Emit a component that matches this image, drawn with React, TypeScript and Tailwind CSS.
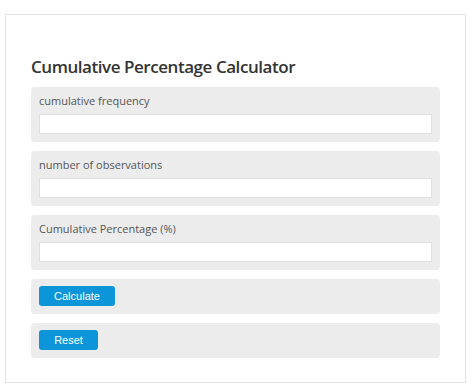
import React from 'react';

const fields = ['cumulative frequency', 'number of observations', 'Cumulative Percentage (%)'];

export default function App() {
  return (
    <div className="w-[474px] h-[389px] bg-white pt-[14px] pl-[5px]" style={{ fontFamily: '"Open Sans", sans-serif' }}>
      <div className="w-[461px] h-[369px] border border-[#e3e3e3] bg-white px-[25px] pt-[40px]">
        <h1 className="text-[17px] leading-[24px] font-semibold text-[#333] tracking-[-0.45px] mb-[8px]">Cumulative Percentage Calculator</h1>
        <div className="flex flex-col gap-[9px]">
          {fields.map((f) => (
            <div key={f} className="bg-[#ececec] rounded-[4px] px-[8px] pt-[6px] pb-[8px]">
              <div className="text-[11px] leading-[16px] text-[#555] mb-[5px]">{f}</div>
              <input type="text" className="block w-full h-[20px] bg-white border border-[#e0e0e0] outline-none" />
            </div>
          ))}
          <div className="bg-[#ececec] rounded-[4px] px-[8px] pt-[7px] pb-[8px]">
            <button className="block h-[20px] w-[76px] rounded-[3px] bg-[#0d95da] text-white text-[11px] leading-[20px]" style={{ fontFamily: '"Liberation Sans", sans-serif' }}>Calculate</button>
          </div>
          <div className="bg-[#ececec] rounded-[4px] px-[8px] pt-[7px] pb-[8px]">
            <button className="block h-[20px] w-[59px] rounded-[3px] bg-[#0d95da] text-white text-[11px] leading-[20px]" style={{ fontFamily: '"Liberation Sans", sans-serif' }}>Reset</button>
          </div>
        </div>
      </div>
    </div>
  );
}
